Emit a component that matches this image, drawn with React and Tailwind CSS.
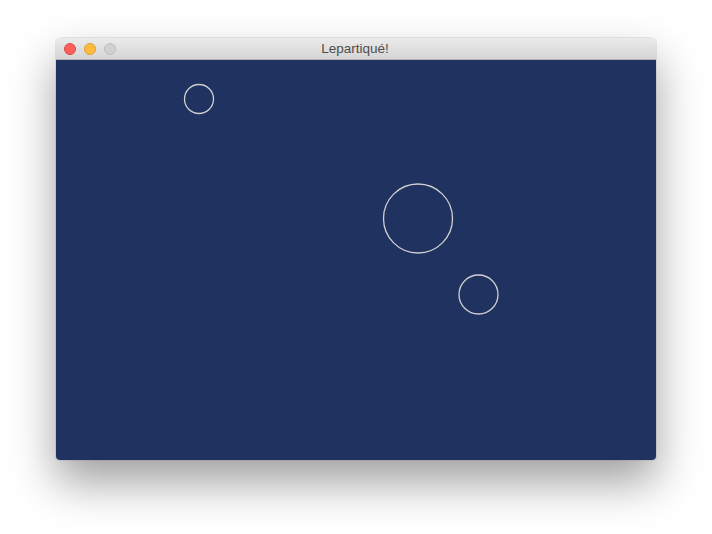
import React from 'react';

const circles = [
    { cx: 143, cy: 39, r: 14.5 },
    { cx: 362, cy: 158.5, r: 34.5 },
    { cx: 422.5, cy: 234.5, r: 19.5 },
];

const TrafficLights = () => (
    <div className="flex items-center gap-2 pl-2">
        <span className="w-3 h-3 rounded-full bg-[#fc605c] border border-[#df4744]" />
        <span className="w-3 h-3 rounded-full bg-[#fdbc40] border border-[#de9e34]" />
        <span className="w-3 h-3 rounded-full bg-[#d0d0d0] border border-[#bdbdbd]" />
    </div>
);

const App = () => {
    return (
        <div className="w-[712px] h-[534px] bg-white pt-[38px] pl-[56px]" style={{ fontFamily: '"Helvetica Neue", "Liberation Sans", Arial, sans-serif' }}>
            <div className="w-[600px] rounded-t-[5px] rounded-b-[4px] overflow-hidden shadow-[0_22px_45px_rgba(0,0,0,0.38),0_0_0_1px_rgba(0,0,0,0.08)]">
                <div className="relative h-[22px] flex items-center bg-gradient-to-b from-[#ebebeb] to-[#d5d5d5] border-b border-[#b4b4b4]">
                    <TrafficLights />
                    <span className="absolute inset-0 flex items-center justify-center pt-px pr-[2px] text-[13.5px] text-[#4d4d4d]">
                        Lepartiqué!
                    </span>
                </div>
                <div className="h-[400px] bg-[#1f3260]">
                    <svg width="600" height="400" className="block">
                        {circles.map((c, i) => (
                            <circle key={i} cx={c.cx} cy={c.cy} r={c.r} fill="none" stroke="#cfcfcf" strokeWidth="1.3" />
                        ))}
                    </svg>
                </div>
            </div>
        </div>
    );
};

export default App;
